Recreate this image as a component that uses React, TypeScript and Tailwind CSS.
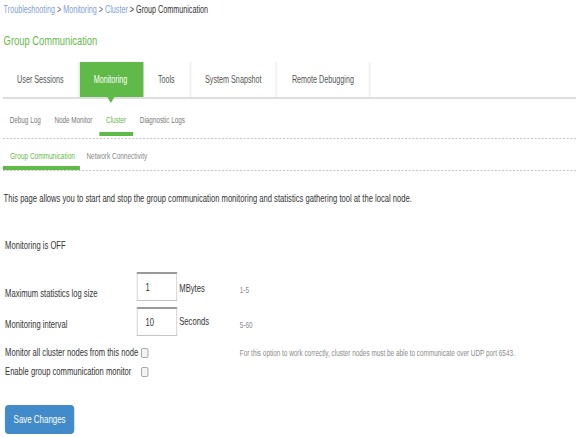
import React from 'react';

// the reference uses a narrow face that is not installed, so the page is laid
// out 800px wide in Liberation Sans and squeezed horizontally to 576px
const font = { fontFamily: '"Liberation Sans", Arial, sans-serif' };

const tabs = [
  { label: 'User Sessions', w: 'w-[107px]' },
  { label: 'Monitoring', w: 'w-[88px]', active: true },
  { label: 'Tools', w: 'w-[67px]' },
  { label: 'System Snapshot', w: 'w-[119px]' },
  { label: 'Remote Debugging', w: 'w-[130px]' },
];

const subTabs = ['Debug Log', 'Node Monitor', 'Cluster', 'Diagnostic Logs'];

function Checkbox() {
  return <span className="block w-[10px] h-[10px] border border-[#9a9a9a] rounded-[2px] bg-[#f4f4f4]" />;
}

export default function App() {
  return (
    <div className="w-[576px] h-[437px] bg-white overflow-hidden">
      <div className="w-[800px] h-[437px] origin-top-left scale-x-[0.72] text-[#333]" style={font}>
        {/* breadcrumb */}
        <div className="h-[20px] pt-[3px] pl-[5px] text-[10px] leading-[14px] whitespace-nowrap">
          <span className="text-[#7f9fd6]">Troubleshooting</span>
          <span className="text-[#666]"> &gt; </span>
          <span className="text-[#7f9fd6]">Monitoring</span>
          <span className="text-[#666]"> &gt; </span>
          <span className="text-[#7f9fd6]">Cluster</span>
          <span className="text-[#333]"> &gt; Group Communication</span>
        </div>

        <h1 className="mt-[13px] pl-[5px] text-[13px] leading-[16px] text-[#67b94a]">Group Communication</h1>

        {/* main tabs */}
        <div className="mt-[13px] ml-[4px] h-[37px] flex border-b-2 border-[#dddddd]">
          {tabs.map((t) => (
            <div
              key={t.label}
              className={`relative ${t.w} h-[35px] flex items-center justify-center text-[10px] border-r-[3px] ${
                t.active ? 'bg-[#5fba47] text-white border-[#5fba47]' : 'text-[#555] border-[#f3f3f3]'
              }`}
            >
              {t.label}
              {t.active && (
                <span className="absolute left-1/2 -translate-x-1/2 top-[35px] w-0 h-0 border-l-[5px] border-r-[5px] border-t-[6px] border-l-transparent border-r-transparent border-t-[#5fba47]" />
              )}
            </div>
          ))}
        </div>

        {/* sub tabs */}
        <div className="mt-[14px] ml-[4px] pb-[2px] flex border-b border-dashed border-[#bdbdbd] text-[8.8px] text-[#777]">
          {subTabs.map((t) => (
            <div key={t} className="flex flex-col">
              <div className={`px-[9.5px] h-[14px] leading-[14px] whitespace-nowrap ${t === 'Cluster' ? 'text-[#67b94a]' : ''}`}>{t}</div>
              <div className={`mt-[5px] h-[4px] ${t === 'Cluster' ? 'bg-[#5fba47]' : ''}`} />
            </div>
          ))}
        </div>

        <div className="mt-[10px] ml-[4px] flex border-b border-dashed border-[#bdbdbd] text-[9px] text-[#888]">
          <div className="w-[107px] flex flex-col">
            <div className="pl-[10px] h-[14px] leading-[14px] whitespace-nowrap text-[#67b94a]">Group Communication</div>
            <div className="mt-[3px] h-[4px] bg-[#5fba47]" />
          </div>
          <div className="pl-[9px] h-[14px] leading-[14px] whitespace-nowrap">Network Connectivity</div>
        </div>

        <p className="mt-[20px] pl-[5px] text-[10.6px] leading-[14px] whitespace-nowrap">
          This page allows you to start and stop the group communication monitoring and statistics gathering tool at the local node.
        </p>

        <p className="mt-[33px] pl-[7px] text-[10.6px] leading-[14px]">Monitoring is OFF</p>

        {/* form */}
        <div className="mt-[20px] pl-[7px] grid grid-cols-[183px_56px_87px_1fr] text-[10.6px] leading-[14px] whitespace-nowrap">
          <div className="h-[29px] pt-[14px]">Maximum statistics log size</div>
          <div className="h-[29px] border border-[#c4c4c4] border-t-2 border-t-[#9a9a9a] pl-[11px] pt-[6px] text-[#333]">1</div>
          <div className="pt-[9px] pl-[3px]">MBytes</div>
          <div className="pt-[11px] text-[8.9px] text-[#8a8a8a]">1-5</div>

          <div className="col-span-4 h-[6px]" />

          <div className="h-[29px] pt-[10px]">Monitoring interval</div>
          <div className="h-[29px] border border-[#c4c4c4] border-t-2 border-t-[#9a9a9a] pl-[11px] pt-[6px] text-[#333]">10</div>
          <div className="pt-[7px] pl-[3px]">Seconds</div>
          <div className="pt-[11px] text-[8.9px] text-[#8a8a8a]">5-60</div>

          <div className="h-[25px] pt-[9px]">Monitor all cluster nodes from this node</div>
          <div className="pt-[12px] pl-[6px]">
            <Checkbox />
          </div>
          <div />
          <div className="pt-[10px] text-[8.9px] text-[#8a8a8a]">
            For this option to work correctly, cluster nodes must be able to communicate over UDP port 6543.
          </div>

          <div className="h-[20px] pt-[3px]">Enable group communication monitor</div>
          <div className="pt-[6px] pl-[6px]">
            <Checkbox />
          </div>
          <div />
          <div />
        </div>

        <button className="mt-[24px] ml-[7px] w-[96px] h-[29px] rounded-[4px] bg-[#428bca] border border-[#3a7fc0] text-white text-[11px]">
          Save Changes
        </button>
      </div>
    </div>
  );
}
